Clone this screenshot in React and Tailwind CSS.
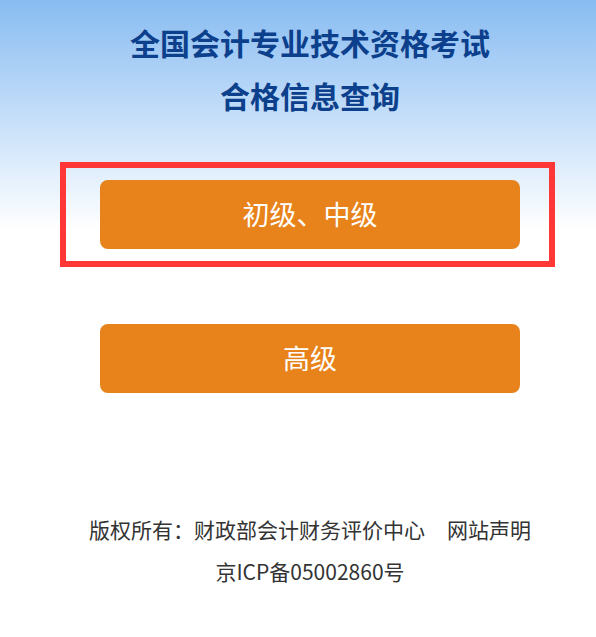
export default function App() {
  return (
    <div
      className="min-h-[637px] w-full bg-white bg-gradient-to-b from-[#88bcf1] to-white bg-[length:100%_230px] bg-no-repeat pl-[24px]"
      style={{ fontFamily: '"Microsoft YaHei", "Noto Sans CJK SC", "Noto Sans", sans-serif' }}
    >
      {/* Title */}
      <h1 className="pt-[16px] text-center text-[30px] font-bold leading-[53px] text-[#0c3f8c]">
        全国会计专业技术资格考试
        <br />
        合格信息查询
      </h1>

      {/* Level buttons */}
      <div className="mt-[40px] flex flex-col items-center">
        <div className="mr-[5px] border-[6px] border-[#ff3737] pl-[34px] pr-[29px] py-[12px]">
          <button className="flex h-[69px] w-[420px] items-center justify-center rounded-lg bg-[#e8821a] text-[27px] text-white">
            初级、中级
          </button>
        </div>
        <button className="mt-[57px] flex h-[69px] w-[420px] items-center justify-center rounded-lg bg-[#e8821a] text-[27px] text-white">
          高级
        </button>
      </div>

      {/* Footer */}
      <div className="mt-[115px] text-center text-[21px] leading-[42px] text-[#333]">
        <p>
          版权所有：财政部会计财务评价中心
          <span className="ml-[22px]">网站声明</span>
        </p>
        <p>京ICP备05002860号</p>
      </div>
    </div>
  );
}
